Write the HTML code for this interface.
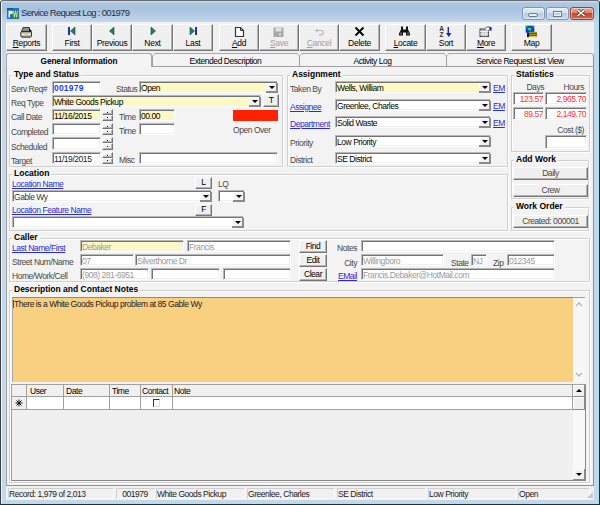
<!DOCTYPE html>
<html><head><meta charset="utf-8"><style>
html,body{margin:0;padding:0;width:600px;height:505px;overflow:hidden;background:#fff}
body>div{position:absolute;box-sizing:content-box}
.t{position:absolute;white-space:nowrap;font-family:"Liberation Sans",sans-serif;font-size:8.5px;letter-spacing:-0.45px;color:#000}
.sk{border:1px solid;border-color:#b8b8b8 #fff #fff #b8b8b8;box-shadow:inset 1px 1px 0 #747474,inset -1px -1px 0 #f0f0f0}
.rz{border:1px solid;border-color:#fff #767676 #767676 #fff;box-shadow:inset -1px -1px 0 #b4b4b4}
.grp{border:1px solid #d0d0d0;box-shadow:inset 1px 1px 0 #fff,1px 1px 0 #fff}
.gt{font-weight:bold;font-size:8.5px;letter-spacing:0;background:#f3f3f3;color:#000}
.arr{width:0;height:0;border-left:3px solid transparent;border-right:3px solid transparent;border-top:3px solid #000}
.arrup{width:0;height:0;border-left:3px solid transparent;border-right:3px solid transparent;border-bottom:3px solid #000}
.ddb{background:#f2f2f2;border-right:2px solid #8a8a8a;border-bottom:2px solid #8a8a8a;box-shadow:inset 1px 1px 0 #fff}
.sb{border:1px solid;border-color:#d0d0d0 #fafafa #fafafa #d0d0d0;background:#f0f0f0}
</style></head><body>
<div style="left:0;top:0;width:598px;height:503px;border:1px solid #3c4044;border-right-color:#14343c;border-bottom-color:#14343c;border-top-color:#6a6e74;border-radius:3px 3px 0 0;background:linear-gradient(#d6e4f2 0px,#aec6e0 2px,#a9c3df 8px,#b6cde6 16px,#c2d8ee 21px,#c4d8ec 22px)"></div>
<div style="left:1px;top:2px;width:1px;height:502px;background:#eaf6ff"></div>
<div style="left:598px;top:2px;width:1px;height:502px;background:#a8e0f4"></div>
<div style="left:1px;top:503px;width:598px;height:1px;background:#a8e0f4"></div>
<div style="left:6px;top:22px;width:588px;height:478px;background:#f0f0f0"></div>
<svg style="position:absolute;left:7px;top:8px" width="12" height="11" viewBox="0 0 12 11"><rect x="0" y="0" width="12" height="11" fill="#1c76b6"/><rect x="0" y="0" width="6" height="2" fill="#0f5e9a"/><path d="M1.5 9.5V2.8h2.6c1.2 0 1.8 0.6 1.8 1.6s-0.6 1.6-1.8 1.6H3v3.5z" fill="#f4f8ff"/><path d="M6 2.8l0.9 6.7h1l0.6-4 0.6 4h1l0.9-6.7H10l-0.5 4-0.6-4H8.1l-0.6 4-0.5-4z" fill="#e4dc20"/></svg>
<div class="t" style="left:21px;top:7px;height:12px;line-height:12px;text-align:left;font-size:9.5px;color:#1e2e48;letter-spacing:-0.7px">Service Request Log : 001979</div>
<div style="left:522px;top:7px;width:21px;height:11px;border:1px solid #8296b0;border-radius:3px;background:linear-gradient(#e4ecf6 0%,#d2e0f0 45%,#b8cce4 50%,#c8d8ec 100%);box-shadow:inset 0 0 0 1px rgba(255,255,255,0.45)"></div>
<div style="left:546px;top:7px;width:21px;height:11px;border:1px solid #8296b0;border-radius:3px;background:linear-gradient(#e4ecf6 0%,#d2e0f0 45%,#b8cce4 50%,#c8d8ec 100%);box-shadow:inset 0 0 0 1px rgba(255,255,255,0.45)"></div>
<div style="left:570px;top:7px;width:22px;height:11px;border:1px solid #8e4636;border-radius:3px;background:linear-gradient(#eaa898 0%,#de8470 45%,#c8462c 50%,#d8664a 100%);box-shadow:inset 0 0 0 1px rgba(255,255,255,0.45)"></div>
<div style="left:528px;top:13px;width:8px;height:2px;background:#eef2f6;border:1px solid #6a7a90;border-radius:2px"></div>
<div style="left:553px;top:11px;width:7px;height:4px;background:transparent;border:1px solid #6a7a90;box-shadow:inset 0 0 0 1px #eef2f6"></div>
<svg style="position:absolute;left:576px;top:9px" width="10" height="8" viewBox="0 0 10 8"><path d="M1.5 1l7 6M8.5 1l-7 6" stroke="#6a3a30" stroke-width="3"/><path d="M1.5 1l7 6M8.5 1l-7 6" stroke="#fff" stroke-width="1.6"/></svg>
<div class="rz" style="left:6px;top:24px;width:39px;height:25px;background:#f0f0f0"></div>
<div class="t" style="left:6px;top:37px;height:12px;line-height:12px;width:41px;text-align:center;color:#000;font-size:8.5px;letter-spacing:-0.3px"><u>R</u>eports</div>
<div class="rz" style="left:52px;top:24px;width:38px;height:25px;background:#f0f0f0"></div>
<div class="t" style="left:52px;top:37px;height:12px;line-height:12px;width:40px;text-align:center;color:#000;font-size:8.5px;letter-spacing:-0.3px">First</div>
<div class="rz" style="left:92px;top:24px;width:38px;height:25px;background:#f0f0f0"></div>
<div class="t" style="left:92px;top:37px;height:12px;line-height:12px;width:40px;text-align:center;color:#000;font-size:8.5px;letter-spacing:-0.3px">Previous</div>
<div class="rz" style="left:132px;top:24px;width:39px;height:25px;background:#f0f0f0"></div>
<div class="t" style="left:132px;top:37px;height:12px;line-height:12px;width:41px;text-align:center;color:#000;font-size:8.5px;letter-spacing:-0.3px">Next</div>
<div class="rz" style="left:173px;top:24px;width:38px;height:25px;background:#f0f0f0"></div>
<div class="t" style="left:173px;top:37px;height:12px;line-height:12px;width:40px;text-align:center;color:#000;font-size:8.5px;letter-spacing:-0.3px">Last</div>
<div class="rz" style="left:219px;top:24px;width:38px;height:25px;background:#f0f0f0"></div>
<div class="t" style="left:219px;top:37px;height:12px;line-height:12px;width:40px;text-align:center;color:#000;font-size:8.5px;letter-spacing:-0.3px"><u>A</u>dd</div>
<div class="rz" style="left:259px;top:24px;width:38px;height:25px;background:#f0f0f0"></div>
<div class="t" style="left:259px;top:37px;height:12px;line-height:12px;width:40px;text-align:center;color:#a0a0a0;font-size:8.5px;letter-spacing:-0.3px"><u>S</u>ave</div>
<div class="rz" style="left:299px;top:24px;width:38px;height:25px;background:#f0f0f0"></div>
<div class="t" style="left:299px;top:37px;height:12px;line-height:12px;width:40px;text-align:center;color:#a0a0a0;font-size:8.5px;letter-spacing:-0.3px"><u>C</u>ancel</div>
<div class="rz" style="left:339px;top:24px;width:39px;height:25px;background:#f0f0f0"></div>
<div class="t" style="left:339px;top:37px;height:12px;line-height:12px;width:41px;text-align:center;color:#000;font-size:8.5px;letter-spacing:-0.3px">Delete</div>
<div class="rz" style="left:385px;top:24px;width:39px;height:25px;background:#f0f0f0"></div>
<div class="t" style="left:385px;top:37px;height:12px;line-height:12px;width:41px;text-align:center;color:#000;font-size:8.5px;letter-spacing:-0.3px"><u>L</u>ocate</div>
<div class="rz" style="left:426px;top:24px;width:38px;height:25px;background:#f0f0f0"></div>
<div class="t" style="left:426px;top:37px;height:12px;line-height:12px;width:40px;text-align:center;color:#000;font-size:8.5px;letter-spacing:-0.3px">Sort</div>
<div class="rz" style="left:466px;top:24px;width:38px;height:25px;background:#f0f0f0"></div>
<div class="t" style="left:466px;top:37px;height:12px;line-height:12px;width:40px;text-align:center;color:#000;font-size:8.5px;letter-spacing:-0.3px"><u>M</u>ore</div>
<div class="rz" style="left:511px;top:24px;width:39px;height:25px;background:#f0f0f0"></div>
<div class="t" style="left:511px;top:37px;height:12px;line-height:12px;width:41px;text-align:center;color:#000;font-size:8.5px;letter-spacing:-0.3px">Map</div>
<svg style="position:absolute;left:20px;top:26px" width="12" height="12" viewBox="0 0 12 12"><path d="M3 1.5h6.5v4h-8z" fill="#8c8c8c" stroke="#333" stroke-width="0.9"/><path d="M9 2.5l2.5 2v2.5h-2z" fill="#000"/><path d="M1.5 5.5h9.5l0.5 1v3.5l-1 1.2H1.8L0.8 10V6.5z" fill="#a6a6a6" stroke="#222" stroke-width="0.9"/><rect x="1.5" y="7.6" width="9.5" height="1.6" fill="#f2f2f2"/><circle cx="6.5" cy="8.4" r="1.3" fill="#e8e000"/></svg>
<svg style="position:absolute;left:67px;top:27px" width="9" height="8" viewBox="0 0 9 8"><rect x="1" y="0" width="2" height="8" fill="#2233aa"/><path d="M8 0v8L3.5 4z" fill="#1a8a3a" stroke="#1a3a8a" stroke-width="0.6"/></svg>
<svg style="position:absolute;left:108px;top:27px" width="7" height="8" viewBox="0 0 7 8"><path d="M6 0v8L1.5 4z" fill="#1a8a3a" stroke="#1a3a8a" stroke-width="0.6"/></svg>
<svg style="position:absolute;left:150px;top:27px" width="7" height="8" viewBox="0 0 7 8"><path d="M1 0v8L5.5 4z" fill="#1a8a3a" stroke="#1a3a8a" stroke-width="0.6"/></svg>
<svg style="position:absolute;left:189px;top:27px" width="9" height="8" viewBox="0 0 9 8"><path d="M1 0v8L5.5 4z" fill="#1a8a3a" stroke="#1a3a8a" stroke-width="0.6"/><rect x="6" y="0" width="2" height="8" fill="#2233aa"/></svg>
<svg style="position:absolute;left:234px;top:26px" width="11" height="12" viewBox="0 0 11 12"><path d="M1.5 1.5h5l3 3v6h-8z" fill="#fff" stroke="#333" stroke-width="1.2"/><path d="M6.5 1.5v3h3" fill="none" stroke="#333" stroke-width="1"/></svg>
<svg style="position:absolute;left:273px;top:27px" width="11" height="10" viewBox="0 0 11 10"><rect x="0.5" y="0.5" width="10" height="9.5" fill="#a8a8a8"/><rect x="2.5" y="1" width="6" height="3.5" fill="#e0e0e0"/><rect x="6" y="6.5" width="2" height="2" fill="#e0e0e0"/></svg>
<svg style="position:absolute;left:314px;top:28px" width="10" height="8" viewBox="0 0 10 8"><path d="M3 2.5h4a2.2 2.2 0 0 1 0 4.4H5" fill="none" stroke="#b8b8b8" stroke-width="1.2"/><path d="M1 2.5l2.5-2v4z" fill="#b8b8b8"/></svg>
<svg style="position:absolute;left:354px;top:26px" width="11" height="11" viewBox="0 0 11 11"><path d="M1.5 1.5l8 8M9.5 1.5l-8 8" stroke="#000" stroke-width="1.8"/></svg>
<svg style="position:absolute;left:398px;top:26px" width="13" height="10" viewBox="0 0 13 10"><path d="M3 0.5h2v3h3v-3h2v3l2 4v2H8v-3H5v3H1v-2l2-4z" fill="#111"/><circle cx="3" cy="7.5" r="1" fill="#777"/><circle cx="10" cy="7.5" r="1" fill="#777"/></svg>
<svg style="position:absolute;left:439px;top:26px" width="13" height="12" viewBox="0 0 13 12"><text x="0.3" y="5.2" font-family="Liberation Sans" font-size="6.5" font-weight="bold" fill="#333">A</text><text x="0.5" y="11" font-family="Liberation Sans" font-size="6.5" font-weight="bold" fill="#333">Z</text><rect x="8.6" y="1" width="1.4" height="8" fill="#1a2ab0"/><path d="M7 7h5.5l-2.75 4z" fill="#1a2ab0"/></svg>
<svg style="position:absolute;left:479px;top:25px" width="14" height="13" viewBox="0 0 14 13"><rect x="1" y="4" width="8.5" height="7.5" fill="#bdbdbd" stroke="#444" stroke-width="1"/><path d="M1 6.5h8.5M1 9h8.5M4 6v5.5M6.7 6v5.5" stroke="#f4f4f4" stroke-width="0.9"/><path d="M5.5 4l2-2h3.5v2.5l-1.5 1" fill="#f8f8f8" stroke="#555" stroke-width="0.9"/><rect x="10.6" y="2" width="2" height="3.6" fill="#1a2ab8"/></svg>
<svg style="position:absolute;left:525px;top:25px" width="13" height="13" viewBox="0 0 13 13"><rect x="0.7" y="0.7" width="8.6" height="7" fill="#1030e8"/><path d="M0.7 0.7h2v1.5h-2zM7.5 0.7h1.8v1.8h-1.8z" fill="#20d040"/><path d="M2.5 3.2c1-1 3-1 4 0.2c0.5 1-0.5 2.2-1.8 2.2c-1 0-2.5-1-2.2-2.4z" fill="#10f020"/><rect x="2" y="7.7" width="2" height="4.5" fill="#101840"/><rect x="4" y="6.8" width="8" height="5.4" fill="#b8a830"/><path d="M4 8.3h8M4 10.3h8" stroke="#302a10" stroke-width="0.8"/><rect x="4.5" y="11" width="7" height="1" fill="#e0d050"/></svg>
<div style="left:6px;top:53px;width:588px;height:14px;background:#f3f3f3;border-top:1px solid #a9a9a9;border-radius:3px 3px 0 0;box-sizing:border-box;border-left:1px solid #a9a9a9;border-right:1px solid #909090"></div>
<div style="left:152px;top:53px;width:1px;height:14px;background:#a0a0a0"></div>
<svg style="position:absolute;left:149px;top:52px" width="7" height="5" viewBox="0 0 7 5"><path d="M0 1.5Q3 1.5 3.5 4.5Q4 1.5 7 1.5" fill="none" stroke="#a0a0a0" stroke-width="1"/><path d="M1 1.0L3.5 3.8L6 1.0z" fill="#f2f2f2"/></svg>
<div style="left:299px;top:53px;width:1px;height:14px;background:#a0a0a0"></div>
<svg style="position:absolute;left:296px;top:52px" width="7" height="5" viewBox="0 0 7 5"><path d="M0 1.5Q3 1.5 3.5 4.5Q4 1.5 7 1.5" fill="none" stroke="#a0a0a0" stroke-width="1"/><path d="M1 1.0L3.5 3.8L6 1.0z" fill="#f2f2f2"/></svg>
<div style="left:446px;top:53px;width:1px;height:14px;background:#a0a0a0"></div>
<svg style="position:absolute;left:443px;top:52px" width="7" height="5" viewBox="0 0 7 5"><path d="M0 1.5Q3 1.5 3.5 4.5Q4 1.5 7 1.5" fill="none" stroke="#a0a0a0" stroke-width="1"/><path d="M1 1.0L3.5 3.8L6 1.0z" fill="#f2f2f2"/></svg>
<div style="left:152px;top:66px;width:442px;height:1px;background:#a0a0a0"></div>
<div style="left:6px;top:67px;width:588px;height:419px;background:#f3f3f3;border:1px solid #a0a0a0;border-right-color:#909090;border-bottom-color:#909090;border-top:none;box-sizing:border-box"></div>
<div style="left:6px;top:53px;width:146px;height:14px;background:#f4f4f4;border:1px solid #a9a9a9;border-bottom:none;box-sizing:border-box;border-radius:3px 3px 0 0"></div>
<div class="t" style="left:6px;top:55px;height:12px;line-height:12px;width:146px;text-align:center;font-weight:bold;font-size:8.3px;letter-spacing:-0.1px">General Information</div>
<div class="t" style="left:152px;top:55px;height:12px;line-height:12px;width:147px;text-align:center;">Extended Description</div>
<div class="t" style="left:299px;top:55px;height:12px;line-height:12px;width:147px;text-align:center;">Activity Log</div>
<div class="t" style="left:446px;top:55px;height:12px;line-height:12px;width:148px;text-align:center;">Service Request List View</div>
<div class="grp" style="left:9px;top:75px;width:272px;height:90px"></div>
<div class="t gt" style="left:12px;top:68px;height:12px;line-height:12px;padding:0 2px">Type and Status</div>
<div class="t" style="left:11px;top:83px;height:12px;line-height:12px;text-align:left;color:#484848">Serv Req#</div>
<div class="sk" style="left:52px;top:81px;width:47px;height:11px;background:#fff"></div>
<div class="t" style="left:54px;top:83px;height:11px;line-height:11px;text-align:left;color:#000;color:#1a3cff;font-weight:bold;font-size:8.5px;letter-spacing:0.2px">001979</div>
<div class="t" style="left:116px;top:83px;height:12px;line-height:12px;text-align:left;color:#484848">Status</div>
<div class="sk" style="left:139px;top:81px;width:137px;height:10px;background:#fdf9c4"></div>
<div class="ddb" style="left:266px;top:83px;width:10px;height:8px"></div>
<div class="arr" style="left:269px;top:86px"></div>
<div class="t" style="left:141px;top:83px;height:10px;line-height:10px;text-align:left;color:#000">Open</div>
<div class="t" style="left:11px;top:97px;height:12px;line-height:12px;text-align:left;color:#484848">Req Type</div>
<div class="sk" style="left:52px;top:95px;width:207px;height:10px;background:#fdf9c4"></div>
<div class="ddb" style="left:249px;top:97px;width:10px;height:8px"></div>
<div class="arr" style="left:252px;top:100px"></div>
<div class="t" style="left:54px;top:97px;height:10px;line-height:10px;text-align:left;color:#000">White Goods Pickup</div>
<div class="rz" style="left:263px;top:94px;width:14px;height:11px;background:#f0f0f0"></div>
<div class="t" style="left:263px;top:95px;height:11px;line-height:11px;width:16px;text-align:center;">T</div>
<div class="t" style="left:11px;top:111px;height:12px;line-height:12px;text-align:left;color:#484848">Call Date</div>
<div class="sk" style="left:52px;top:109px;width:47px;height:10px;background:#fdf9c4"></div>
<div class="t" style="left:54px;top:111px;height:10px;line-height:10px;text-align:left;color:#000;">11/16/2015</div>
<div class="rz" style="left:102px;top:109px;width:9px;height:4px;background:#f0f0f0"></div>
<div class="rz" style="left:102px;top:115px;width:9px;height:4px;background:#f0f0f0"></div>
<div style="left:107px;top:112px;width:1px;height:1px;background:#000"></div>
<div style="left:107px;top:117px;width:1px;height:1px;background:#000"></div>
<div class="t" style="left:119px;top:111px;height:12px;line-height:12px;text-align:left;color:#484848">Time</div>
<div class="sk" style="left:139px;top:109px;width:34px;height:10px;background:#fdf9c4"></div>
<div class="t" style="left:141px;top:111px;height:10px;line-height:10px;text-align:left;color:#000;">00.00</div>
<div style="left:233px;top:110px;width:45px;height:11px;background:#ff2200"></div>
<div class="t" style="left:233px;top:124px;height:12px;line-height:12px;text-align:left;color:#484848">Open Over</div>
<div class="t" style="left:11px;top:126px;height:12px;line-height:12px;text-align:left;color:#484848">Completed</div>
<div class="sk" style="left:52px;top:123px;width:47px;height:10px;background:#fff"></div>
<div class="rz" style="left:102px;top:123px;width:9px;height:4px;background:#f0f0f0"></div>
<div class="rz" style="left:102px;top:129px;width:9px;height:4px;background:#f0f0f0"></div>
<div style="left:107px;top:126px;width:1px;height:1px;background:#000"></div>
<div style="left:107px;top:131px;width:1px;height:1px;background:#000"></div>
<div class="t" style="left:119px;top:125px;height:12px;line-height:12px;text-align:left;color:#484848">Time</div>
<div class="sk" style="left:139px;top:123px;width:34px;height:10px;background:#fff"></div>
<div class="t" style="left:11px;top:141px;height:12px;line-height:12px;text-align:left;color:#484848">Scheduled</div>
<div class="sk" style="left:52px;top:137px;width:47px;height:11px;background:#fff"></div>
<div class="rz" style="left:102px;top:137px;width:9px;height:4px;background:#f0f0f0"></div>
<div class="rz" style="left:102px;top:143px;width:9px;height:5px;background:#f0f0f0"></div>
<div style="left:107px;top:140px;width:1px;height:1px;background:#000"></div>
<div style="left:107px;top:146px;width:1px;height:1px;background:#000"></div>
<div class="t" style="left:11px;top:155px;height:12px;line-height:12px;text-align:left;color:#484848">Target</div>
<div class="sk" style="left:52px;top:152px;width:47px;height:10px;background:#fff"></div>
<div class="t" style="left:54px;top:154px;height:10px;line-height:10px;text-align:left;color:#222;">11/19/2015</div>
<div class="rz" style="left:102px;top:152px;width:9px;height:4px;background:#f0f0f0"></div>
<div class="rz" style="left:102px;top:158px;width:9px;height:4px;background:#f0f0f0"></div>
<div style="left:107px;top:155px;width:1px;height:1px;background:#000"></div>
<div style="left:107px;top:160px;width:1px;height:1px;background:#000"></div>
<div class="t" style="left:119px;top:154px;height:12px;line-height:12px;text-align:left;color:#484848">Misc</div>
<div class="sk" style="left:139px;top:152px;width:137px;height:10px;background:#fff"></div>
<div class="grp" style="left:287px;top:75px;width:219px;height:90px"></div>
<div class="t gt" style="left:290px;top:68px;height:12px;line-height:12px;padding:0 2px">Assignment</div>
<div class="t" style="left:290px;top:83px;height:12px;line-height:12px;text-align:left;color:#484848">Taken By</div>
<div class="sk" style="left:335px;top:81px;width:154px;height:10px;background:#fdf9c4"></div>
<div class="ddb" style="left:479px;top:83px;width:10px;height:8px"></div>
<div class="arr" style="left:482px;top:86px"></div>
<div class="t" style="left:337px;top:83px;height:10px;line-height:10px;text-align:left;color:#000">Wells, William</div>
<div class="t" style="left:493px;top:82px;height:12px;line-height:12px;text-align:left;color:#2a2ad8;text-decoration:underline">EM</div>
<div class="t" style="left:290px;top:101px;height:12px;line-height:12px;text-align:left;color:#2a2ad8;text-decoration:underline">Assignee</div>
<div class="sk" style="left:335px;top:99px;width:154px;height:10px;background:#fff"></div>
<div class="ddb" style="left:479px;top:101px;width:10px;height:8px"></div>
<div class="arr" style="left:482px;top:104px"></div>
<div class="t" style="left:337px;top:101px;height:10px;line-height:10px;text-align:left;color:#000">Greenlee, Charles</div>
<div class="t" style="left:493px;top:100px;height:12px;line-height:12px;text-align:left;color:#2a2ad8;text-decoration:underline">EM</div>
<div class="t" style="left:290px;top:118px;height:12px;line-height:12px;text-align:left;color:#2a2ad8;text-decoration:underline">Department</div>
<div class="sk" style="left:335px;top:116px;width:154px;height:10px;background:#fff"></div>
<div class="ddb" style="left:479px;top:118px;width:10px;height:8px"></div>
<div class="arr" style="left:482px;top:121px"></div>
<div class="t" style="left:337px;top:118px;height:10px;line-height:10px;text-align:left;color:#000">Solid Waste</div>
<div class="t" style="left:493px;top:117px;height:12px;line-height:12px;text-align:left;color:#2a2ad8;text-decoration:underline">EM</div>
<div class="t" style="left:290px;top:137px;height:12px;line-height:12px;text-align:left;color:#484848">Priority</div>
<div class="sk" style="left:335px;top:135px;width:154px;height:10px;background:#fff"></div>
<div class="ddb" style="left:479px;top:137px;width:10px;height:8px"></div>
<div class="arr" style="left:482px;top:140px"></div>
<div class="t" style="left:337px;top:137px;height:10px;line-height:10px;text-align:left;color:#000">Low Priority</div>
<div class="t" style="left:290px;top:154px;height:12px;line-height:12px;text-align:left;color:#484848">District</div>
<div class="sk" style="left:335px;top:152px;width:154px;height:10px;background:#fff"></div>
<div class="ddb" style="left:479px;top:154px;width:10px;height:8px"></div>
<div class="arr" style="left:482px;top:157px"></div>
<div class="t" style="left:337px;top:154px;height:10px;line-height:10px;text-align:left;color:#000">SE District</div>
<div class="grp" style="left:511px;top:75px;width:77px;height:75px"></div>
<div class="t gt" style="left:514px;top:68px;height:12px;line-height:12px;padding:0 2px">Statistics</div>
<div class="t" style="left:513px;top:81px;height:12px;line-height:12px;width:31px;text-align:right;color:#484848">Days</div>
<div class="t" style="left:546px;top:81px;height:12px;line-height:12px;width:38px;text-align:right;color:#484848">Hours</div>
<div class="sk" style="left:513px;top:92px;width:29px;height:11px;background:#fff"></div>
<div class="t" style="left:513px;top:94px;height:10px;line-height:10px;width:30px;text-align:right;color:#ff3030">123.57</div>
<div class="sk" style="left:545px;top:92px;width:40px;height:11px;background:#fff"></div>
<div class="t" style="left:545px;top:94px;height:10px;line-height:10px;width:41px;text-align:right;color:#ff3030">2,965.70</div>
<div class="sk" style="left:513px;top:107px;width:29px;height:11px;background:#fff"></div>
<div class="t" style="left:513px;top:109px;height:10px;line-height:10px;width:30px;text-align:right;color:#ff3030">89.57</div>
<div class="sk" style="left:545px;top:107px;width:40px;height:11px;background:#fff"></div>
<div class="t" style="left:545px;top:109px;height:10px;line-height:10px;width:41px;text-align:right;color:#ff3030">2,149.70</div>
<div class="t" style="left:546px;top:124px;height:12px;line-height:12px;width:38px;text-align:right;color:#484848">Cost ($)</div>
<div class="sk" style="left:545px;top:135px;width:40px;height:12px;background:#fff"></div>
<div class="grp" style="left:511px;top:160px;width:76px;height:37px"></div>
<div class="t gt" style="left:514px;top:153px;height:12px;line-height:12px;padding:0 2px">Add Work</div>
<div class="rz" style="left:513px;top:167px;width:73px;height:11px;background:#f0f0f0"></div>
<div class="t" style="left:513px;top:167px;height:12px;line-height:12px;width:75px;text-align:center;color:#484848">Daily</div>
<div class="rz" style="left:513px;top:184px;width:73px;height:11px;background:#f0f0f0"></div>
<div class="t" style="left:513px;top:184px;height:12px;line-height:12px;width:75px;text-align:center;color:#484848">Crew</div>
<div class="grp" style="left:511px;top:207px;width:76px;height:22px"></div>
<div class="t gt" style="left:514px;top:200px;height:12px;line-height:12px;padding:0 2px">Work Order</div>
<div class="rz" style="left:513px;top:215px;width:73px;height:11px;background:#f0f0f0"></div>
<div class="t" style="left:513px;top:215px;height:12px;line-height:12px;width:75px;text-align:center;color:#484848">Created: 000001</div>
<div class="grp" style="left:9px;top:174px;width:497px;height:55px"></div>
<div class="t gt" style="left:12px;top:167px;height:12px;line-height:12px;padding:0 2px">Location</div>
<div class="t" style="left:12px;top:178px;height:12px;line-height:12px;text-align:left;color:#2a2ad8;text-decoration:underline">Location Name</div>
<div class="rz" style="left:195px;top:177px;width:15px;height:10px;background:#f0f0f0"></div>
<div class="t" style="left:195px;top:177px;height:11px;line-height:11px;width:17px;text-align:center;">L</div>
<div class="t" style="left:218px;top:178px;height:12px;line-height:12px;text-align:left;color:#484848">LQ</div>
<div class="sk" style="left:12px;top:190px;width:198px;height:10px;background:#fff"></div>
<div class="ddb" style="left:200px;top:192px;width:10px;height:8px"></div>
<div class="arr" style="left:203px;top:195px"></div>
<div class="t" style="left:14px;top:192px;height:10px;line-height:10px;text-align:left;color:#333">Gable Wy</div>
<div class="sk" style="left:218px;top:190px;width:25px;height:10px;background:#fff"></div>
<div class="ddb" style="left:233px;top:192px;width:10px;height:8px"></div>
<div class="arr" style="left:236px;top:195px"></div>
<div class="t" style="left:12px;top:204px;height:12px;line-height:12px;text-align:left;color:#2a2ad8;text-decoration:underline">Location Feature Name</div>
<div class="rz" style="left:195px;top:204px;width:15px;height:10px;background:#f0f0f0"></div>
<div class="t" style="left:195px;top:204px;height:11px;line-height:11px;width:17px;text-align:center;">F</div>
<div class="sk" style="left:12px;top:216px;width:230px;height:10px;background:#fff"></div>
<div class="ddb" style="left:232px;top:218px;width:10px;height:8px"></div>
<div class="arr" style="left:235px;top:221px"></div>
<div class="grp" style="left:9px;top:238px;width:579px;height:42px"></div>
<div class="t gt" style="left:12px;top:231px;height:12px;line-height:12px;padding:0 2px">Caller</div>
<div class="t" style="left:12px;top:242px;height:12px;line-height:12px;text-align:left;color:#2a2ad8;text-decoration:underline">Last Name/First</div>
<div class="sk" style="left:80px;top:240px;width:102px;height:10px;background:#fdf9c4"></div>
<div class="t" style="left:82px;top:242px;height:10px;line-height:10px;text-align:left;color:#9a9a9a;">Debaker</div>
<div class="sk" style="left:187px;top:240px;width:102px;height:10px;background:#fff"></div>
<div class="t" style="left:189px;top:242px;height:10px;line-height:10px;text-align:left;color:#9a9a9a;">Francis</div>
<div class="t" style="left:12px;top:256px;height:12px;line-height:12px;text-align:left;color:#484848">Street Num/Name</div>
<div class="sk" style="left:80px;top:254px;width:52px;height:10px;background:#fff"></div>
<div class="t" style="left:82px;top:256px;height:10px;line-height:10px;text-align:left;color:#9a9a9a;">07</div>
<div class="sk" style="left:135px;top:254px;width:154px;height:10px;background:#fff"></div>
<div class="t" style="left:137px;top:256px;height:10px;line-height:10px;text-align:left;color:#9a9a9a;">Silverthorne Dr</div>
<div class="t" style="left:12px;top:270px;height:12px;line-height:12px;text-align:left;color:#484848">Home/Work/Cell</div>
<div class="sk" style="left:80px;top:268px;width:67px;height:10px;background:#fff"></div>
<div class="t" style="left:82px;top:270px;height:10px;line-height:10px;text-align:left;color:#9a9a9a;">(908) 281-6951</div>
<div class="sk" style="left:151px;top:268px;width:67px;height:10px;background:#fff"></div>
<div class="sk" style="left:223px;top:268px;width:66px;height:10px;background:#fff"></div>
<div class="rz" style="left:299px;top:240px;width:26px;height:11px;background:#f0f0f0"></div>
<div class="t" style="left:299px;top:240px;height:12px;line-height:12px;width:28px;text-align:center;">Find</div>
<div class="rz" style="left:299px;top:254px;width:26px;height:11px;background:#f0f0f0"></div>
<div class="t" style="left:299px;top:254px;height:12px;line-height:12px;width:28px;text-align:center;">Edit</div>
<div class="rz" style="left:299px;top:268px;width:26px;height:11px;background:#f0f0f0"></div>
<div class="t" style="left:299px;top:268px;height:12px;line-height:12px;width:28px;text-align:center;">Clear</div>
<div class="t" style="left:330px;top:242px;height:12px;line-height:12px;width:27px;text-align:right;color:#484848">Notes</div>
<div class="sk" style="left:361px;top:240px;width:192px;height:10px;background:#fff"></div>
<div class="t" style="left:330px;top:257px;height:12px;line-height:12px;width:27px;text-align:right;color:#484848">City</div>
<div class="sk" style="left:361px;top:254px;width:81px;height:10px;background:#fff"></div>
<div class="t" style="left:363px;top:256px;height:10px;line-height:10px;text-align:left;color:#9a9a9a;">Willingboro</div>
<div class="t" style="left:451px;top:257px;height:12px;line-height:12px;text-align:left;color:#484848">State</div>
<div class="sk" style="left:471px;top:254px;width:14px;height:10px;background:#fff"></div>
<div class="t" style="left:473px;top:256px;height:10px;line-height:10px;text-align:left;color:#9a9a9a;">NJ</div>
<div class="t" style="left:493px;top:257px;height:12px;line-height:12px;text-align:left;color:#484848">Zip</div>
<div class="sk" style="left:507px;top:254px;width:46px;height:10px;background:#fff"></div>
<div class="t" style="left:509px;top:256px;height:10px;line-height:10px;text-align:left;color:#9a9a9a;">012345</div>
<div class="t" style="left:330px;top:270px;height:12px;line-height:12px;width:27px;text-align:right;color:#2a2ad8;text-decoration:underline">EMail</div>
<div class="sk" style="left:361px;top:268px;width:192px;height:10px;background:#fff"></div>
<div class="t" style="left:363px;top:270px;height:10px;line-height:10px;text-align:left;color:#9a9a9a;">Francis.Debaker@HotMail.com</div>
<div class="grp" style="left:9px;top:290px;width:579px;height:191px"></div>
<div class="t gt" style="left:12px;top:283px;height:12px;line-height:12px;padding:0 2px">Description and Contact Notes</div>
<div style="left:12px;top:297px;width:561px;height:85px;background:#f9cf80;border-top:1px solid #8a8a8a;border-left:1px solid #a8a8a8;box-sizing:border-box"></div>
<div style="left:13px;top:300px;width:1px;height:8px;background:#555"></div>
<div class="t" style="left:14px;top:299px;height:11px;line-height:11px;text-align:left;color:#222">There is a White Goods Pickup problem at 85 Gable Wy</div>
<div style="left:573px;top:297px;width:12px;height:85px;background:#f7f7f7;border-top:1px solid #a0a0a0;box-sizing:border-box"></div>
<svg style="position:absolute;left:575px;top:302px" width="8" height="5" viewBox="0 0 8 5"><path d="M1 4l3-3 3 3" fill="none" stroke="#b4b4b4" stroke-width="1.3"/></svg>
<svg style="position:absolute;left:575px;top:372px" width="8" height="5" viewBox="0 0 8 5"><path d="M1 1l3 3 3-3" fill="none" stroke="#b4b4b4" stroke-width="1.3"/></svg>
<div style="left:11px;top:384px;width:575px;height:97px;background:#f0f0f0;border:1px solid #a0a0a0;border-right-color:#8a8a8a;border-bottom-color:#8a8a8a;box-sizing:border-box"></div>
<div style="left:12px;top:396px;width:561px;height:1px;background:#a0a0a0"></div>
<div style="left:27px;top:397px;width:545px;height:12px;background:#fff"></div>
<div style="left:12px;top:409px;width:561px;height:1px;background:#a0a0a0"></div>
<div style="left:26px;top:385px;width:1px;height:25px;background:#a0a0a0"></div>
<div style="left:63px;top:385px;width:1px;height:25px;background:#a0a0a0"></div>
<div style="left:109px;top:385px;width:1px;height:25px;background:#a0a0a0"></div>
<div style="left:140px;top:385px;width:1px;height:25px;background:#a0a0a0"></div>
<div style="left:172px;top:385px;width:1px;height:25px;background:#a0a0a0"></div>
<div style="left:572px;top:385px;width:1px;height:25px;background:#a0a0a0"></div>
<div class="t" style="left:30px;top:386px;height:11px;line-height:11px;text-align:left;">User</div>
<div class="t" style="left:66px;top:386px;height:11px;line-height:11px;text-align:left;">Date</div>
<div class="t" style="left:112px;top:386px;height:11px;line-height:11px;text-align:left;">Time</div>
<div class="t" style="left:142px;top:386px;height:11px;line-height:11px;text-align:left;">Contact</div>
<div class="t" style="left:174px;top:386px;height:11px;line-height:11px;text-align:left;">Note</div>
<svg style="position:absolute;left:15px;top:399px" width="8" height="8" viewBox="0 0 8 8"><path d="M4 0.5v7M0.5 4h7M1.5 1.5l5 5M6.5 1.5l-5 5" stroke="#111" stroke-width="1"/></svg>
<div style="left:153px;top:399px;width:7px;height:8px;background:#fff;border:1px solid #333;border-right-color:#ddd;border-bottom-color:#ddd;box-sizing:border-box"></div>
<div style="left:573px;top:385px;width:12px;height:95px;background:#f8f8f8"></div>
<div style="left:573px;top:385px;width:12px;height:12px;background:#f0f0f0;border-right:1px solid #8a8a8a;border-bottom:1px solid #8a8a8a;box-sizing:border-box;box-shadow:inset 1px 1px 0 #fff"></div>
<div class="arrup" style="left:576px;top:389px"></div>
<div style="left:573px;top:397px;width:12px;height:13px;background:#f0f0f0;border-right:1px solid #8a8a8a;border-bottom:1px solid #8a8a8a;box-sizing:border-box;box-shadow:inset 1px 1px 0 #fff"></div>
<div style="left:573px;top:469px;width:12px;height:11px;background:#f0f0f0;border-right:1px solid #8a8a8a;border-bottom:1px solid #8a8a8a;box-sizing:border-box;box-shadow:inset 1px 1px 0 #fff"></div>
<div class="arr" style="left:576px;top:473px"></div>
<div class="sb" style="left:8px;top:488px;width:104px;height:9px"></div>
<div class="t" style="left:9px;top:489px;height:11px;line-height:11px;width:103px;text-align:left;color:#222">Record: 1,979 of 2,013</div>
<div class="sb" style="left:116px;top:488px;width:37px;height:9px"></div>
<div class="t" style="left:117px;top:489px;height:11px;line-height:11px;width:36px;text-align:center;color:#222">001979</div>
<div class="sb" style="left:156px;top:488px;width:87px;height:9px"></div>
<div class="t" style="left:157px;top:489px;height:11px;line-height:11px;width:86px;text-align:left;color:#222">White Goods Pickup</div>
<div class="sb" style="left:247px;top:488px;width:86px;height:9px"></div>
<div class="t" style="left:248px;top:489px;height:11px;line-height:11px;width:85px;text-align:left;color:#222">Greenlee, Charles</div>
<div class="sb" style="left:337px;top:488px;width:87px;height:9px"></div>
<div class="t" style="left:338px;top:489px;height:11px;line-height:11px;width:86px;text-align:left;color:#222">SE District</div>
<div class="sb" style="left:428px;top:488px;width:86px;height:9px"></div>
<div class="t" style="left:429px;top:489px;height:11px;line-height:11px;width:85px;text-align:left;color:#222">Low Priority</div>
<div class="sb" style="left:518px;top:488px;width:70px;height:9px"></div>
<div class="t" style="left:519px;top:489px;height:11px;line-height:11px;width:69px;text-align:left;color:#222">Open</div>
<svg style="position:absolute;left:586px;top:491px" width="8" height="8" viewBox="0 0 8 8"><path d="M7 1L1 7h6z" fill="#c8c8c8"/></svg>
</body></html>
